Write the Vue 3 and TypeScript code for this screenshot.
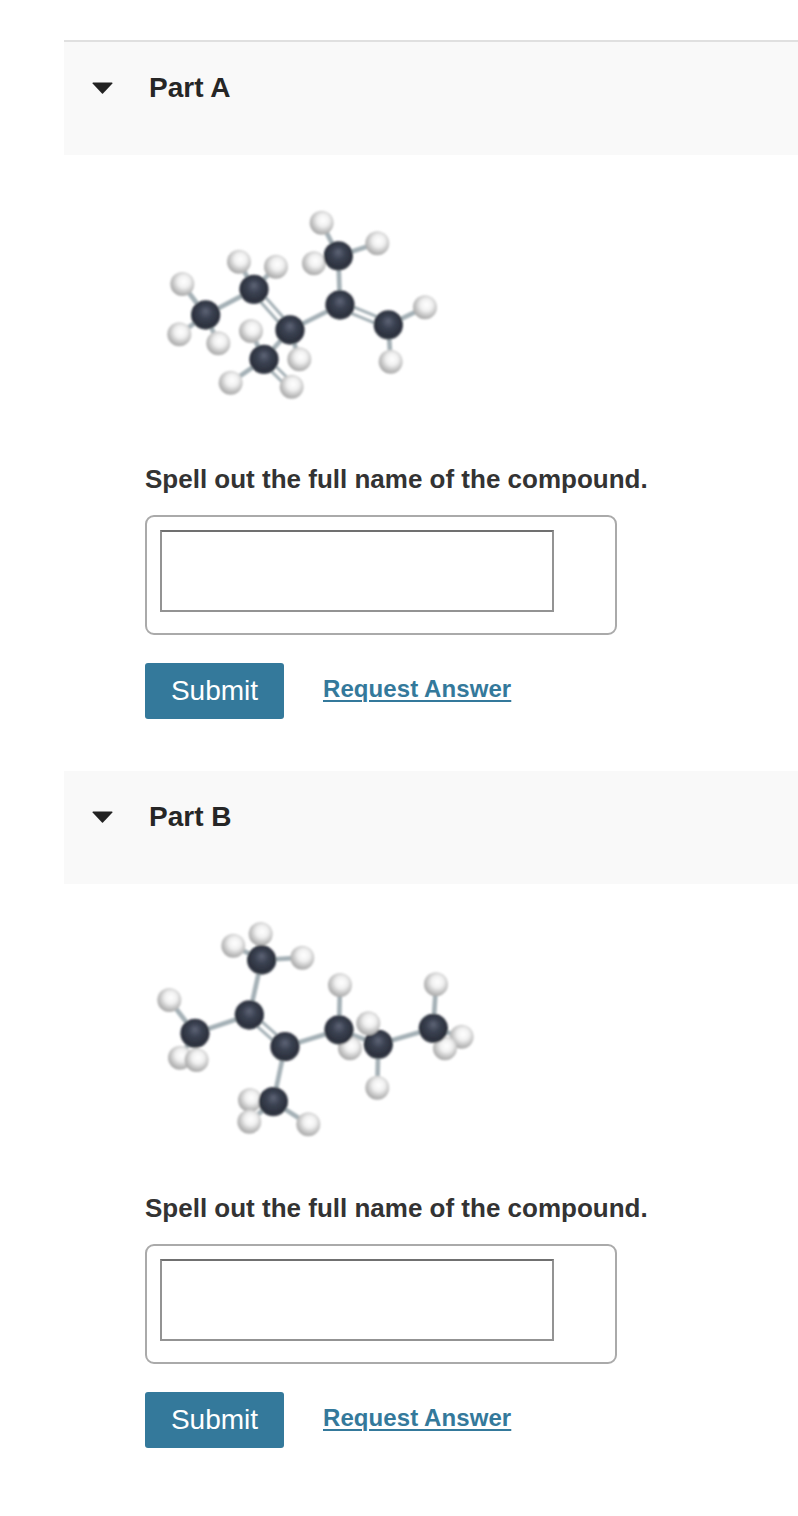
<script setup lang="ts">
type Atom = { x: number; y: number; k: 'c' | 'h' }
type Bond = { a: [number, number]; b: [number, number]; double?: boolean }
type Part = { id: string; title: string; dy: number; bonds: Bond[]; atoms: Atom[] }

const c = (x: number, y: number): Atom => ({ x, y, k: 'c' })
const h = (x: number, y: number): Atom => ({ x, y, k: 'h' })
const bond = (a: [number, number], b: [number, number], double = false): Bond => ({ a, b, double })

const partA: Part = {
  id: 'a',
  title: 'Part A',
  dy: 45,
  bonds: [
    bond([197, 345], [127, 252]), bond([197, 345], [118, 403]), bond([197, 345], [235, 430]),
    bond([197, 345], [342, 268]), bond([342, 268], [297, 185]), bond([342, 268], [408, 200]),
    bond([342, 268], [450, 390], true), bond([450, 390], [372, 478]), bond([450, 390], [478, 478]),
    bond([450, 390], [600, 315]), bond([372, 478], [333, 393]), bond([372, 478], [272, 548]),
    bond([372, 478], [455, 560], true), bond([600, 315], [595, 168]), bond([595, 168], [522, 190]),
    bond([595, 168], [545, 68]), bond([595, 168], [712, 130]), bond([600, 315], [745, 375], true),
    bond([745, 375], [855, 322]), bond([745, 375], [752, 485]),
  ],
  atoms: [
    h(127, 252), h(118, 403), h(235, 430), h(297, 185), h(408, 200), h(333, 393), h(478, 478),
    h(272, 548), h(455, 560), h(522, 190), h(545, 68), h(712, 130), h(855, 322), h(752, 485),
    c(197, 345), c(342, 268), c(450, 390), c(372, 478), c(600, 315), c(595, 168), c(745, 375),
  ],
}

const partB: Part = {
  id: 'b',
  title: 'Part B',
  dy: 31,
  bonds: [
    bond([165, 355], [88, 255]), bond([165, 355], [120, 428]), bond([165, 355], [170, 435]),
    bond([165, 355], [328, 300]), bond([328, 300], [365, 135]), bond([365, 135], [280, 92]),
    bond([365, 135], [362, 57]), bond([365, 135], [487, 128]), bond([328, 300], [435, 395], true),
    bond([435, 395], [400, 560]), bond([400, 560], [330, 555]), bond([400, 560], [328, 620]),
    bond([400, 560], [505, 628]), bond([435, 395], [597, 345]), bond([597, 345], [600, 210]),
    bond([597, 345], [630, 400]), bond([597, 345], [715, 388]), bond([715, 388], [685, 325]),
    bond([715, 388], [712, 518]), bond([715, 388], [880, 340]), bond([880, 340], [888, 208]),
    bond([880, 340], [965, 365]), bond([880, 340], [915, 400]),
  ],
  atoms: [
    h(88, 255), h(120, 428), h(170, 435), h(280, 92), h(362, 57), h(487, 128), h(600, 210),
    h(630, 400), h(712, 518), h(888, 208), h(965, 365), h(915, 400), h(330, 555), h(328, 620), h(505, 628),
    c(165, 355), c(328, 300), c(365, 135), c(435, 395), c(400, 560), c(597, 345), c(715, 388),
    h(685, 325), c(880, 340),
  ],
}

const parts: Part[] = [partA, partB]

function doubleLines(b: Bond): number[][] {
  const dx = b.b[0] - b.a[0]
  const dy = b.b[1] - b.a[1]
  const len = Math.hypot(dx, dy)
  const nx = (-dy / len) * 10
  const ny = (dx / len) * 10
  return [
    [b.a[0] + nx, b.a[1] + ny, b.b[0] + nx, b.b[1] + ny],
    [b.a[0] - nx, b.a[1] - ny, b.b[0] - nx, b.b[1] - ny],
  ]
}
</script>

<template>
  <main class="page">
    <section v-for="part in parts" :key="part.id" class="part">
      <header class="part-head">
        <svg class="caret" width="21" height="12" viewBox="0 0 21 12" aria-hidden="true">
          <path d="M1 0.5H20a.6.6 0 0 1 .4 1L11 11.4a.7.7 0 0 1-1 0L.6 1.5a.6.6 0 0 1 .4-1Z" />
        </svg>
        <h2 class="part-title">{{ part.title }}</h2>
      </header>
      <div class="part-body">
        <svg class="molecule" width="340" height="305" viewBox="0 0 340 305" role="img" :aria-label="`Ball and stick model, ${part.title}`">
          <defs>
            <radialGradient :id="`carbon-${part.id}`" cx="50%" cy="46%" r="56%" fx="50%" fy="36%">
              <stop offset="0%" stop-color="#5f6577" />
              <stop offset="40%" stop-color="#3b4252" />
              <stop offset="82%" stop-color="#2b303c" />
              <stop offset="100%" stop-color="#454a54" />
            </radialGradient>
            <radialGradient :id="`hydrogen-${part.id}`" cx="56%" cy="40%" r="64%">
              <stop offset="0%" stop-color="#ffffff" />
              <stop offset="38%" stop-color="#f1f1f1" />
              <stop offset="72%" stop-color="#c2c2c2" />
              <stop offset="100%" stop-color="#a2a2a2" />
            </radialGradient>
            <filter :id="`soft-${part.id}`" x="-5%" y="-5%" width="110%" height="110%">
              <feGaussianBlur stdDeviation="3.8" />
            </filter>
          </defs>
          <g :transform="`translate(-5 ${part.dy}) scale(0.3333)`" :filter="`url(#soft-${part.id})`">
            <template v-for="(b, i) in part.bonds" :key="i">
              <template v-if="b.double">
                <line v-for="(l, j) in doubleLines(b)" :key="j" :x1="l[0]" :y1="l[1]" :x2="l[2]" :y2="l[3]" class="bond thin" />
              </template>
              <line v-else :x1="b.a[0]" :y1="b.a[1]" :x2="b.b[0]" :y2="b.b[1]" class="bond" />
            </template>
            <circle
              v-for="(atom, i) in part.atoms"
              :key="i"
              :cx="atom.x"
              :cy="atom.y"
              :r="atom.k === 'c' ? 44 : 36"
              :fill="atom.k === 'c' ? `url(#carbon-${part.id})` : `url(#hydrogen-${part.id})`"
            />
          </g>
        </svg>
        <p class="prompt">Spell out the full name of the compound.</p>
        <div class="answer-box">
          <input class="answer-input" type="text" :aria-label="`${part.title} answer`" />
        </div>
        <div class="actions">
          <button class="submit" type="button">Submit</button>
          <a class="request" href="#">Request Answer</a>
        </div>
      </div>
    </section>
  </main>
</template>

<style>
html,
body {
  background: #fff;
}
</style>

<style scoped>
.page {
  box-sizing: border-box;
  height: 1516px;
  padding: 40px 0 0 64px;
  font-family: "Liberation Sans", Arial, sans-serif;
  overflow: hidden;
}
.part:first-child {
  border-top: 2px solid #e0e0e0;
}
.part-head {
  box-sizing: border-box;
  height: 113px;
  padding: 27px 0 0 28px;
  background: #f9f9f9;
  display: flex;
  align-items: flex-start;
  gap: 36px;
}
.caret {
  flex: none;
  margin-top: 13px;
  fill: #222;
}
.part-title {
  margin: 0;
  font-size: 28px;
  line-height: 38px;
  font-weight: 700;
  color: #262626;
}
.part-body {
  padding: 0 0 52px 81px;
}
.molecule {
  display: block;
}
.bond {
  stroke: #a4b0b6;
  stroke-width: 14;
}
.thin {
  stroke-width: 9;
}
.prompt {
  margin: 0;
  font-size: 26px;
  line-height: 38px;
  font-weight: 700;
  color: #333;
  white-space: nowrap;
}
.answer-box {
  box-sizing: border-box;
  width: 472px;
  height: 120px;
  margin-top: 17px;
  padding: 13px;
  border: 2px solid #aaa;
  border-radius: 9px;
}
.answer-input {
  display: block;
  box-sizing: border-box;
  width: 394px;
  height: 82px;
  margin: 0;
  padding: 0 8px;
  border: 2px solid #939393;
  border-top-color: #707070;
  border-radius: 0;
  background: #fff;
  outline: none;
}
.actions {
  display: flex;
  align-items: flex-start;
  gap: 39px;
  margin-top: 28px;
}
.submit {
  box-sizing: border-box;
  width: 139px;
  height: 56px;
  padding: 0;
  border: 0;
  border-radius: 3px;
  background: #34799b;
  color: #fff;
  font: 400 28px/56px "Liberation Sans", Arial, sans-serif;
}
.request {
  font-size: 24px;
  line-height: 52px;
  font-weight: 700;
  letter-spacing: 0.08px;
  color: #34799b;
  text-decoration: underline;
  text-decoration-thickness: 2px;
  text-underline-offset: 3px;
}
</style>
